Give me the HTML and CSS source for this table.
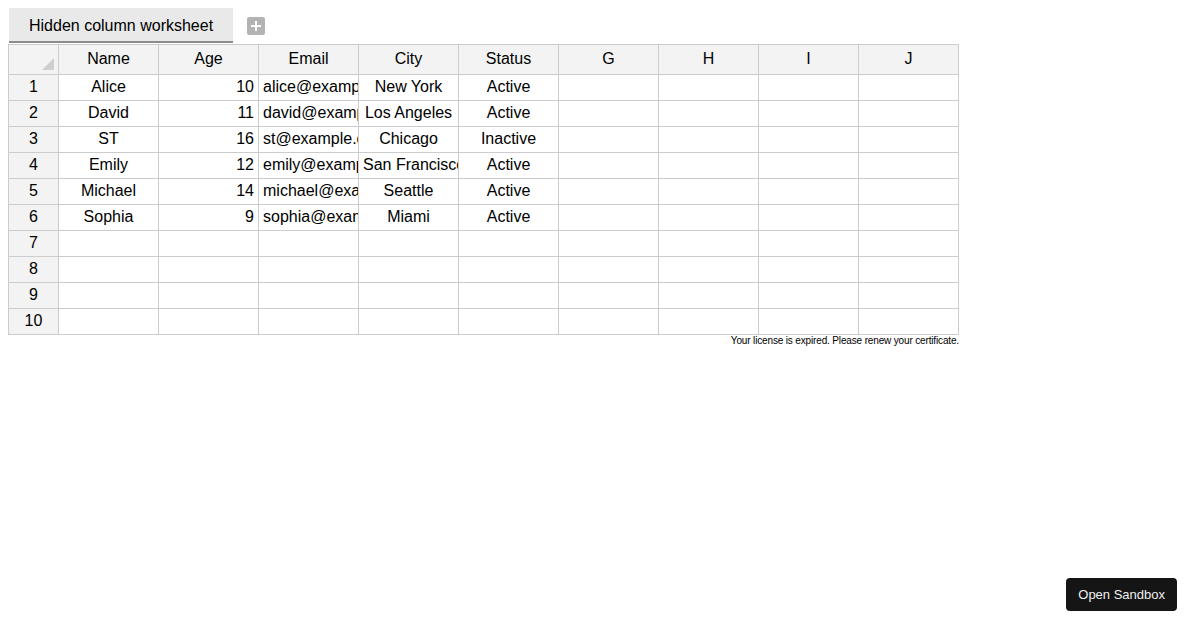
FILE: index.html
```html
<!DOCTYPE html>
<html>
<head>
<meta charset="utf-8">
<link rel="stylesheet" href="styles.css">
</head>
<body>
<div class="sheet">
  <div class="tabs">
    <div class="tab">Hidden column worksheet</div>
    <div class="add"><svg width="18" height="18" viewBox="0 0 18 18"><rect x="0" y="0" width="18" height="18" rx="2" fill="#b3b3b3"/><path d="M9 4v10M4 9h10" stroke="#fff" stroke-width="2"/></svg></div>
  </div>
  <table class="grid">
    <colgroup><col class="c-idx"><col><col><col><col><col><col><col><col><col></colgroup>
    <thead>
      <tr><th class="corner"><span class="tri"></span></th><th>Name</th><th>Age</th><th>Email</th><th>City</th><th>Status</th><th>G</th><th>H</th><th>I</th><th>J</th></tr>
    </thead>
    <tbody>
      <tr><th>1</th><td>Alice</td><td class="num">10</td><td class="txt">alice@example.com</td><td>New York</td><td>Active</td><td></td><td></td><td></td><td></td></tr>
      <tr><th>2</th><td>David</td><td class="num">11</td><td class="txt">david@example.com</td><td>Los Angeles</td><td>Active</td><td></td><td></td><td></td><td></td></tr>
      <tr><th>3</th><td>ST</td><td class="num">16</td><td class="txt">st@example.com</td><td>Chicago</td><td>Inactive</td><td></td><td></td><td></td><td></td></tr>
      <tr><th>4</th><td>Emily</td><td class="num">12</td><td class="txt">emily@example.com</td><td class="clip">San Francisco</td><td>Active</td><td></td><td></td><td></td><td></td></tr>
      <tr><th>5</th><td>Michael</td><td class="num">14</td><td class="txt">michael@example.com</td><td>Seattle</td><td>Active</td><td></td><td></td><td></td><td></td></tr>
      <tr><th>6</th><td>Sophia</td><td class="num">9</td><td class="txt">sophia@example.com</td><td>Miami</td><td>Active</td><td></td><td></td><td></td><td></td></tr>
      <tr><th>7</th><td></td><td></td><td></td><td></td><td></td><td></td><td></td><td></td><td></td></tr>
      <tr><th>8</th><td></td><td></td><td></td><td></td><td></td><td></td><td></td><td></td><td></td></tr>
      <tr><th>9</th><td></td><td></td><td></td><td></td><td></td><td></td><td></td><td></td><td></td></tr>
      <tr><th>10</th><td></td><td></td><td></td><td></td><td></td><td></td><td></td><td></td><td></td></tr>
    </tbody>
  </table>
  <div class="license">Your license is expired. Please renew your certificate.</div>
</div>
<button class="sandbox">Open Sandbox</button>
</body>
</html>
```

FILE: styles.css
```css
body {
  margin: 8px;
  font-family: "Liberation Sans", Arial, sans-serif;
  color: #000;
  background: #fff;
}
.sheet {
  width: 951px;
}
.tabs {
  display: flex;
  align-items: flex-start;
  height: 35px;
  margin-bottom: 1px;
}
.tab {
  margin-left: 1px;
  height: 33px;
  line-height: 35px;
  padding: 0 20px;
  background: #e9e9e9;
  border-bottom: 2px solid #8c8c8c;
  font-size: 16px;
  box-sizing: content-box;
}
.add {
  margin-left: 14px;
  margin-top: 9px;
  display: flex;
}
.grid {
  border-collapse: collapse;
  table-layout: fixed;
  width: 951px;
  font-size: 16px;
}
.grid col { width: 100px; }
.grid col.c-idx { width: 50px; }
.grid th, .grid td {
  border: 1px solid #cccccc;
  height: 25px;
  padding: 0 0 2px 0;
  box-sizing: border-box;
  text-align: center;
  white-space: nowrap;
  overflow: hidden;
  font-weight: normal;
  line-height: 22px;
}
.grid thead th {
  height: 30px;
  background: #f3f3f3;
}
.grid tbody th, .grid tbody td {
  height: 26px;
}
.grid tbody th {
  background: #f3f3f3;
}
.grid td.num {
  text-align: right;
  padding-right: 4px;
}
.grid td.txt {
  text-align: left;
  padding-left: 4px;
}
.grid td.clip {
  text-align: left;
  padding-left: 4px;
}
.corner {
  position: relative;
}
.tri {
  position: absolute;
  right: 4px;
  bottom: 4px;
  width: 0;
  height: 0;
  border-left: 12px solid transparent;
  border-bottom: 12px solid #cfcfcf;
}
.license {
  text-align: right;
  font-size: 10px;
  line-height: 11px;
  margin-top: 0;
  letter-spacing: -0.15px;
}
.sandbox {
  position: fixed;
  right: 23px;
  bottom: 19px;
  height: 33px;
  padding: 0 12px;
  background: #151515;
  color: #f0f0f0;
  border: none;
  border-radius: 4px;
  font-family: "Liberation Sans", Arial, sans-serif;
  font-size: 13px;
}
```
